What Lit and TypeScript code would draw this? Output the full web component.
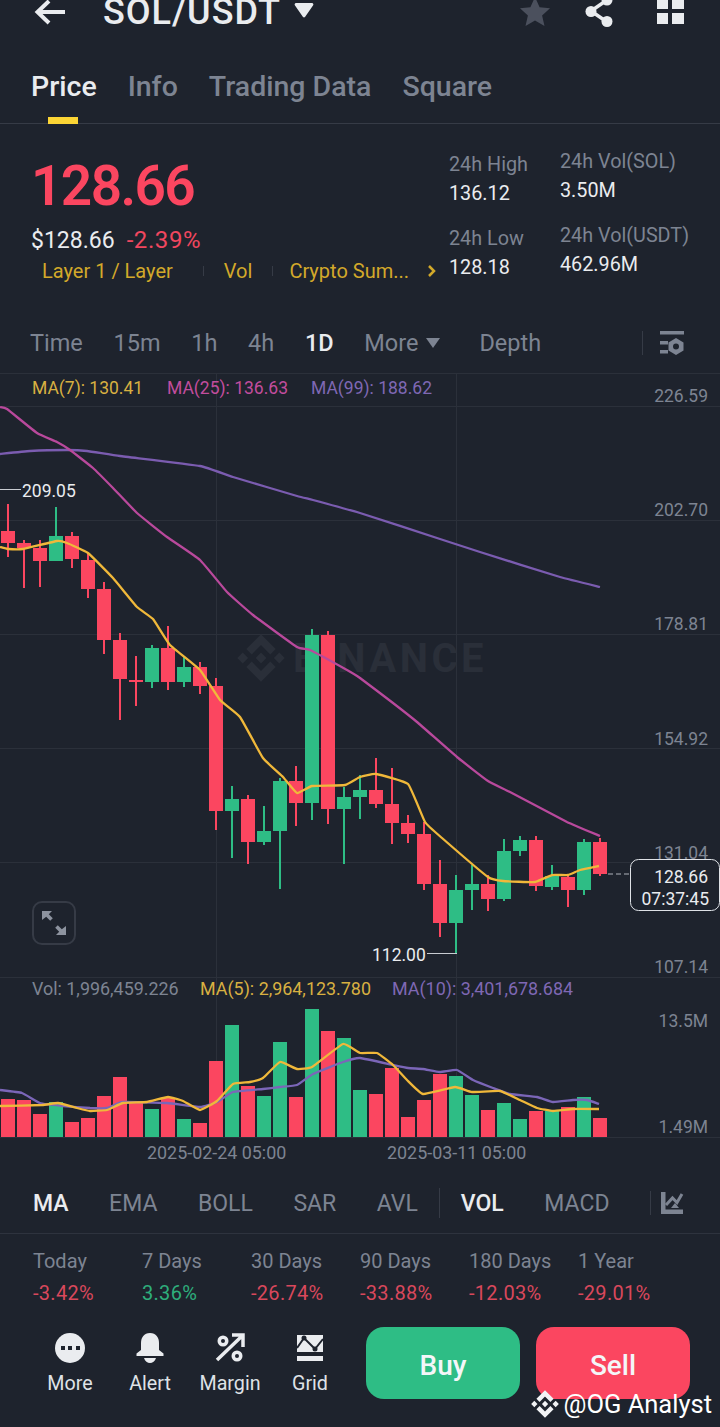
import { LitElement, html, css, svg } from 'lit';
import { customElement } from 'lit/decorators.js';

const GREEN = '#2ebd85';
const RED = '#fb4660';

// body top, body bottom, wick top, wick bottom, up?  one candle every 16px
type Candle = [number, number, number, number, boolean];

const candles: Candle[] = [
  [531, 543, 504, 557, false],
  [543, 548, 540, 588, false],
  [548, 561, 540, 587, false],
  [536, 561, 507, 561, true],
  [536, 559, 532, 568, false],
  [560, 589, 553, 598, false],
  [589, 640, 582, 654, false],
  [640, 679, 633, 720, false],
  [680, 682, 656, 706, false],
  [648, 682, 645, 688, true],
  [648, 682, 626, 690, false],
  [667, 682, 657, 687, true],
  [667, 686, 662, 694, false],
  [686, 811, 678, 830, false],
  [799, 811, 786, 858, true],
  [799, 842, 795, 864, false],
  [831, 842, 806, 845, true],
  [781, 831, 778, 889, true],
  [781, 803, 766, 826, false],
  [635, 803, 629, 820, true],
  [635, 809, 631, 824, false],
  [797, 809, 787, 864, true],
  [790, 797, 775, 819, true],
  [790, 804, 758, 808, false],
  [804, 823, 768, 844, false],
  [823, 834, 815, 843, false],
  [834, 884, 822, 890, false],
  [884, 923, 860, 937, false],
  [890, 923, 875, 953, true],
  [884, 890, 865, 910, true],
  [884, 899, 875, 911, false],
  [851, 899, 839, 901, true],
  [840, 851, 836, 856, true],
  [840, 886, 836, 891, false],
  [876, 887, 865, 890, true],
  [877, 890, 875, 907, false],
  [842, 890, 839, 895, true],
  [842, 874, 838, 876, false],
];

const volumes: [number, boolean][] = [
  [1099, false], [1100, false], [1114, false], [1102, true], [1122, false], [1118, false],
  [1096, false], [1077, false], [1103, false], [1109, true], [1098, false], [1119, true],
  [1123, false], [1061, false], [1025, true], [1086, false], [1096, true], [1042, true],
  [1097, false], [1009, true], [1031, false], [1038, true], [1090, true], [1094, false],
  [1068, false], [1117, false], [1100, false], [1074, false], [1076, true], [1095, true],
  [1110, false], [1103, true], [1119, true], [1111, false], [1111, true], [1107, false],
  [1097, true], [1118, false],
];

const ma7 =
  '0,547 8,549 23,549 57,541 67,543 88,553 113,578 137,607 153,619 170,645 200,670 220,700 240,717 263,758 283,777 297,793 312,786 345,785 360,777 376,774 408,784 425,822 442,838 488,877 503,881 535,882 552,875 568,875 580,870 599,866';
const ma25 =
  '0,407 7,409 37,433 57,442 70,450 93,468 113,488 137,513 167,537 200,560 227,592 253,615 297,647 310,650 347,670 360,678 393,703 417,722 457,757 488,781 510,792 567,822 600,836';
const ma99 =
  '0,454 30,451 67,450 87,451 120,456 200,466 233,477 297,496 313,500 360,513 440,539 480,552 560,577 600,587';
const volMa5 =
  '0,1106 42,1105 58,1103 77,1108 90,1111 107,1110 123,1103 147,1102 168,1097 183,1101 200,1110 217,1101 233,1084 250,1082 263,1078 280,1062 297,1069 312,1067 343,1044 360,1053 377,1053 393,1065 407,1080 423,1094 455,1087 472,1092 500,1091 520,1100 537,1108 553,1111 573,1109 599,1109';
const volMa10 =
  '0,1090 22,1093 40,1103 63,1106 90,1108 107,1108 123,1102 167,1103 200,1107 217,1102 233,1092 263,1089 280,1087 297,1085 313,1074 343,1062 360,1058 393,1065 408,1068 423,1069 440,1072 457,1070 473,1080 493,1088 510,1094 537,1097 553,1102 573,1100 587,1100 599,1104';

// rounds the corners of a moving average a little, like the chart library does
function smooth(points: string) {
  const p = points.split(' ').map((s) => s.split(',').map(Number));
  let d = `M${p[0][0]} ${p[0][1]}`;
  for (let i = 0; i < p.length - 1; i++) {
    const a = p[Math.max(i - 1, 0)];
    const b = p[i];
    const c = p[i + 1];
    const e = p[Math.min(i + 2, p.length - 1)];
    const k = 0.06;
    d += `C${b[0] + (c[0] - a[0]) * k} ${b[1] + (c[1] - a[1]) * k} ${c[0] - (e[0] - b[0]) * k} ${c[1] - (e[1] - b[1]) * k} ${c[0]} ${c[1]}`;
  }
  return d;
}

const gridY = [373, 406, 520, 634, 748, 862, 977, 1137];
const priceLabels: [string, number][] = [
  ['226.59', 396], ['202.70', 510], ['178.81', 624], ['154.92', 739], ['131.04', 853], ['107.14', 967],
];
const perf: [string, string, boolean][] = [
  ['Today', '-3.42%', false],
  ['7 Days', '3.36%', true],
  ['30 Days', '-26.74%', false],
  ['90 Days', '-33.88%', false],
  ['180 Days', '-12.03%', false],
  ['1 Year', '-29.01%', false],
];

const LOGO =
  'M9.8 13.6L16 7.4l6.2 6.2 3.6-3.6L16 .2 6.2 10zM.2 16l3.6-3.6L7.4 16l-3.6 3.6zm9.6 2.4L16 24.6l6.2-6.2 3.6 3.6L16 31.8 6.2 22zM24.6 16l3.6-3.6 3.6 3.6-3.6 3.6zM19.6 16L16 12.4 13.4 15l-.3.3-.6.7L16 19.6z';

@customElement('app-root')
export class AppRoot extends LitElement {
  static styles = css`
    :host {
      display: block;
      position: relative;
      width: 720px;
      height: 1427px;
      overflow: hidden;
      background: #1e232d;
      color: #eaecef;
      font-family: Roboto, 'Noto Sans', sans-serif;
    }

    svg {
      display: block;
      flex: none;
    }

    /* header */
    .header {
      display: flex;
      align-items: center;
      height: 44px;
      margin-top: -10px;
      padding: 0 35px 0 34px;
    }
    .title {
      margin-left: 37px;
      font-size: 36px;
      font-weight: 500;
      letter-spacing: 1px;
      white-space: nowrap;
    }
    .title_caret {
      margin-left: 13px;
    }
    .header_star {
      margin-left: auto;
    }
    .header_share {
      margin-left: 34px;
    }
    .header_grid {
      margin-left: 42px;
    }

    /* tabs */
    .tabs {
      display: flex;
      gap: 31px;
      height: 55px;
      padding: 34px 0 0 31px;
      border-bottom: 1px solid #363b46;
    }
    .tab {
      position: relative;
      height: 38px;
      line-height: 38px;
      font-size: 28.5px;
      font-weight: 500;
      color: #7d8492;
    }
    .tab_on {
      color: #eaecef;
    }
    .tab_on::after {
      content: '';
      position: absolute;
      left: 17px;
      top: 49px;
      width: 30px;
      height: 7px;
      background: #fcd535;
    }

    /* price summary */
    .summary {
      display: flex;
      height: 189px;
    }
    .summary_left {
      width: 449px;
      padding: 32px 0 0 33px;
      box-sizing: border-box;
    }
    .price {
      height: 60px;
      margin-left: -2px;
      line-height: 60px;
      font-size: 55px;
      font-weight: 600;
      letter-spacing: -1.6px;
      color: #fb4660;
    }
    .fiat {
      display: flex;
      align-items: baseline;
      gap: 12px;
      margin: 9px 0 0 -2px;
      line-height: 30px;
      font-size: 23px;
    }
    .fiat_change {
      font-size: 24px;
      letter-spacing: 0.6px;
      color: #f0475f;
    }
    .tags {
      display: flex;
      align-items: center;
      margin: 3px 0 0 9px;
      line-height: 24px;
      font-size: 20px;
      color: #d3a92a;
      white-space: nowrap;
    }
    .tag_rule {
      width: 1px;
      height: 10px;
      margin: 0 20px 0 30px;
      background: #363b46;
    }
    .tag_rule_second {
      margin: 0 16px 0 20px;
    }
    .tag_chevron {
      margin-left: 18px;
    }
    .stat_col {
      padding-top: 26px;
      width: 111px;
    }
    .stat_col_second {
      padding-top: 23px;
      width: auto;
    }
    .stat {
      margin-bottom: 16px;
      line-height: 29px;
      font-size: 19.8px;
      white-space: nowrap;
    }
    .stat_label {
      color: #7d8492;
    }

    /* intervals */
    .intervals {
      display: flex;
      align-items: center;
      height: 60px;
      padding-left: 30px;
      font-size: 23.5px;
      color: #7d8492;
    }
    .interval {
      margin-right: 30.7px;
    }
    .interval_on {
      color: #eaecef;
      font-weight: 500;
    }
    .interval_more {
      display: flex;
      align-items: center;
      gap: 8px;
      margin-right: 39px;
    }
    .intervals_end {
      display: flex;
      align-items: center;
      margin-left: auto;
      padding-right: 36px;
      gap: 17px;
    }
    .rule {
      width: 1px;
      height: 24px;
      background: #363b46;
    }

    /* chart text */
    .legend,
    .legend_vol,
    .axis,
    .axis_date,
    .mark,
    .box_text,
    .brand {
      font-family: Roboto, 'Noto Sans', sans-serif;
    }
    .legend {
      font-size: 17.5px;
    }
    .legend_vol {
      font-size: 17.9px;
    }
    .axis {
      font-size: 17.5px;
      fill: #7d8492;
    }
    .axis_date {
      font-size: 17.9px;
      fill: #7d8492;
    }
    .mark {
      font-size: 17.5px;
      fill: #eaecef;
    }
    .box_text {
      font-size: 17.5px;
      fill: #eaecef;
    }
    .brand {
      font-size: 40px;
      font-weight: 700;
      letter-spacing: 3.5px;
      fill: #2a2f39;
    }
    .line {
      fill: none;
      stroke-width: 2.3;
      stroke-linejoin: round;
    }

    /* indicators */
    .indicators {
      display: flex;
      align-items: center;
      height: 60px;
      padding: 6px 0 0 33px;
      border-bottom: 1px solid #2e333e;
      font-size: 23px;
      color: #7d8492;
    }
    .ind {
      margin-right: 40.5px;
    }
    .ind_on {
      color: #eaecef;
      font-weight: 500;
    }
    .ind_rule {
      margin: 0 21px 0 -19px;
      height: 30px;
    }
    .ind_end {
      display: flex;
      align-items: center;
      margin-left: auto;
      gap: 9px;
      padding-right: 36px;
    }

    /* performance */
    .perf {
      display: grid;
      grid-template-columns: repeat(6, 109px);
      grid-auto-flow: column;
      grid-template-rows: 32px 32px;
      padding: 11px 0 0 33px;
      line-height: 32px;
      font-size: 20px;
    }
    .perf_label {
      color: #7d8492;
    }
    .perf_down {
      letter-spacing: 0.3px;
      color: #d9485c;
    }
    .perf_up {
      letter-spacing: 0.3px;
      color: #2eae7c;
    }

    /* bottom bar */
    .actions {
      display: flex;
      padding: 18px 0 0 30px;
    }
    .nav {
      display: flex;
      flex-direction: column;
      align-items: center;
      width: 80px;
      padding-top: 5px;
      font-size: 19.7px;
      line-height: 24px;
      color: #dfe2e7;
    }
    .nav svg {
      margin-bottom: 8px;
    }
    .trade {
      display: flex;
      align-items: center;
      justify-content: center;
      box-sizing: border-box;
      width: 154px;
      height: 72px;
      margin-left: 16px;
      padding-top: 5px;
      border-radius: 18px;
      font-size: 28px;
      font-weight: 500;
      color: #f4f6f8;
    }
    .trade_buy {
      background: #2ebd85;
    }
    .trade_sell {
      background: #fb4660;
    }

    /* watermark over the sell button */
    .stamp {
      position: absolute;
      right: 8px;
      top: 1386px;
      display: flex;
      align-items: center;
      gap: 5px;
      font-size: 25.5px;
      line-height: 36px;
      color: #fff;
      white-space: nowrap;
    }
  `;

  chart() {
    return html`
      <svg width="720" height="794" viewBox="0 373 720 794">
        ${gridY.map((y) => svg`<rect x="0" y=${y} width="720" height="1" fill="#2b303a" />`)}
        <rect x="216" y="373" width="1" height="765" fill="#2b303a" />
        <rect x="456" y="373" width="1" height="765" fill="#2b303a" />

        <svg x="237" y="634" width="48" height="48" viewBox="0 0 32 32">
          <path d=${LOGO} fill="#2a2f39" />
        </svg>
        <text class="brand" x="293" y="672">BINANCE</text>

        ${volumes.map(
          ([top, up], i) => svg`<rect x=${1 + i * 16} y=${top} width="14" height=${1137 - top} fill=${up ? GREEN : RED} />`,
        )}
        ${candles.map(([top, bottom, hi, lo, up], i) => {
          const color = up ? GREEN : RED;
          return svg`
            <rect x=${7 + i * 16} y=${hi} width="2" height=${lo - hi} fill=${color} />
            <rect x=${1 + i * 16} y=${top} width="14" height=${bottom - top} fill=${color} />
          `;
        })}

        <path class="line" d=${smooth(ma99)} stroke="#7b5cb0" />
        <path class="line" d=${smooth(ma25)} stroke="#b9499c" />
        <path class="line" d=${smooth(ma7)} stroke="#f0b83a" />
        <path class="line" d=${smooth(volMa10)} stroke="#7b66b8" />
        <path class="line" d=${smooth(volMa5)} stroke="#f0b83a" />

        <text class="legend" x="32" y="394" fill="#d8b041">MA(7): 130.41</text>
        <text class="legend" x="167" y="394" fill="#c24d9e">MA(25): 136.63</text>
        <text class="legend" x="311" y="394" fill="#7f68b4">MA(99): 188.62</text>

        ${priceLabels.map(([t, y]) => svg`<text class="axis" x="708" y=${y + 6} text-anchor="end">${t}</text>`)}

        <rect x="0" y="489" width="21" height="1" fill="#c8ccd2" />
        <text class="mark" x="22" y="497">209.05</text>
        <rect x="427" y="953" width="30" height="1" fill="#c8ccd2" />
        <text class="mark" x="372" y="961">112.00</text>

        <line x1="608" y1="874" x2="630" y2="874" stroke="#aeb3bb" stroke-width="1" stroke-dasharray="5 3" />
        <rect x="630.5" y="859.5" width="89" height="51" rx="8" fill="#1e232d" stroke="#dfe2e7" />
        <text class="box_text" x="708" y="883" text-anchor="end">128.66</text>
        <text class="box_text" x="709" y="905" text-anchor="end">07:37:45</text>

        <rect x="33" y="902" width="42" height="42" rx="9" fill="none" stroke="#363b46" stroke-width="2" />
        <path
          d="M42 911h10l-3.2 3.2 4 4-2.6 2.6-4-4L42 920zM66 935H56l3.2-3.2-4-4 2.6-2.6 4 4L66 926z"
          fill="#8d939f"
        />

        <text class="legend_vol" x="32" y="995" fill="#7d8492">Vol: 1,996,459.226</text>
        <text class="legend_vol" x="200" y="995" fill="#d8b041">MA(5): 2,964,123.780</text>
        <text class="legend_vol" x="392" y="995" fill="#7f68b4">MA(10): 3,401,678.684</text>
        <text class="axis" x="708" y="1027" text-anchor="end">13.5M</text>
        <text class="axis" x="708" y="1133" text-anchor="end">1.49M</text>
        <text class="axis_date" x="147" y="1159">2025-02-24 05:00</text>
        <text class="axis_date" x="387" y="1159">2025-03-11 05:00</text>
      </svg>
    `;
  }

  render() {
    return html`
      <div class="header">
        <svg width="32" height="44" viewBox="0 0 32 44">
          <path d="M31 22H4M15 11 3.5 22 15 33" fill="none" stroke="#eaecef" stroke-width="4" />
        </svg>
        <span class="title">SOL/USDT</span>
        <svg class="title_caret" width="20" height="44" viewBox="0 0 20 44">
          <path d="M2 13h16a1.5 1.5 0 0 1 1 2.5L11 27a1.5 1.5 0 0 1-2 0L1 15.5A1.5 1.5 0 0 1 2 13z" fill="#eaecef" />
        </svg>
        <svg class="header_star" width="32" height="44" viewBox="0 0 32 44">
          <path d="M16 7l4.6 10.2 10.4 1-7.9 7.2 2.4 10.6L16 30.5 6.5 36l2.4-10.6L1 18.2l10.4-1z" fill="#4b505d" />
        </svg>
        <svg class="header_share" width="28" height="44" viewBox="0 0 28 44">
          <path d="M22 10 6 21l16 11" fill="none" stroke="#eaecef" stroke-width="3.5" />
          <circle cx="6" cy="21.5" r="5.5" fill="#eaecef" />
          <circle cx="22" cy="10" r="5.5" fill="#eaecef" />
          <circle cx="22" cy="31.5" r="5.5" fill="#eaecef" />
        </svg>
        <svg class="header_grid" width="30" height="44" viewBox="0 0 30 44">
          <path d="M2 6h11v13H2zM17 6h12v13H17zM2 23h11v11H2zM17 23h12v11H17z" fill="#eaecef" />
        </svg>
      </div>

      <div class="tabs">
        <span class="tab tab_on">Price</span>
        <span class="tab">Info</span>
        <span class="tab">Trading Data</span>
        <span class="tab">Square</span>
      </div>

      <div class="summary">
        <div class="summary_left">
          <div class="price">128.66</div>
          <div class="fiat"><span>$128.66</span><span class="fiat_change">-2.39%</span></div>
          <div class="tags">
            <span>Layer 1 / Layer</span>
            <span class="tag_rule"></span>
            <span>Vol</span>
            <span class="tag_rule tag_rule_second"></span>
            <span>Crypto Sum...</span>
            <svg class="tag_chevron" width="10" height="14" viewBox="0 0 10 14">
              <path d="M2 2l5 5-5 5" fill="none" stroke="#d3a92a" stroke-width="2.5" />
            </svg>
          </div>
        </div>
        <div class="stat_col">
          <div class="stat"><div class="stat_label">24h High</div><div>136.12</div></div>
          <div class="stat"><div class="stat_label">24h Low</div><div>128.18</div></div>
        </div>
        <div class="stat_col stat_col_second">
          <div class="stat"><div class="stat_label">24h Vol(SOL)</div><div>3.50M</div></div>
          <div class="stat"><div class="stat_label">24h Vol(USDT)</div><div>462.96M</div></div>
        </div>
      </div>

      <div class="intervals">
        <span class="interval">Time</span>
        <span class="interval">15m</span>
        <span class="interval">1h</span>
        <span class="interval">4h</span>
        <span class="interval interval_on">1D</span>
        <span class="interval_more">
          More
          <svg width="14" height="10" viewBox="0 0 14 10"><path d="M0 0h14L7 10z" fill="#7d8492" /></svg>
        </span>
        <span>Depth</span>
        <span class="intervals_end">
          <span class="rule"></span>
          <svg width="24" height="26" viewBox="0 0 24 26" fill="#7d8492">
            <path d="M0 1h24v3.5H0zM0 11h8v3.5H0zM0 20h8v3.5H0z" />
            <path fill-rule="evenodd" d="M16 8l7.5 4.5v8L16 25l-7.5-4.5v-8zM16 13.5a3 3 0 1 0 0 6 3 3 0 0 0 0-6z" />
          </svg>
        </span>
      </div>

      ${this.chart()}

      <div class="indicators">
        <span class="ind ind_on">MA</span>
        <span class="ind">EMA</span>
        <span class="ind">BOLL</span>
        <span class="ind">SAR</span>
        <span class="ind">AVL</span>
        <span class="rule ind_rule"></span>
        <span class="ind ind_on">VOL</span>
        <span class="ind">MACD</span>
        <span class="ind_end">
          <span class="rule"></span>
          <svg width="24" height="24" viewBox="0 0 24 24" fill="#7d8492">
            <path d="M1 1h4.5v17.5H23V23H1z" />
            <path d="M6 14l6.5-7 4.500 4.500L22 3" fill="none" stroke="#7d8492" stroke-width="3" />
            <path d="M11 17l4-5 4 5z" />
          </svg>
        </span>
      </div>

      <div class="perf">
        ${perf.map(
          ([label, value, up]) => html`
            <span class="perf_label">${label}</span>
            <span class=${up ? 'perf_up' : 'perf_down'}>${value}</span>
          `,
        )}
      </div>

      <div class="actions">
        <div class="nav">
          <svg width="40" height="32" viewBox="0 0 40 32">
            <circle cx="20" cy="16" r="15" fill="#eaecef" />
            <path d="M11 14h4v4h-4zM18 14h4v4h-4zM26 14h4v4h-4z" fill="#1e232d" />
          </svg>
          More
        </div>
        <div class="nav">
          <svg width="40" height="32" viewBox="0 0 40 32">
            <path
              d="M20 1c6 0 9 4.5 9 10v7l4.5 3.5V24h-27v-2.500L11 18v-7c0-5.500 3-10 9-10zM14 26h12c-1 3.500-3.500 5-6 5s-5-1.500-6-5z"
              fill="#eaecef"
            />
          </svg>
          Alert
        </div>
        <div class="nav">
          <svg width="40" height="32" viewBox="0 0 40 32">
            <path d="M7 28 32 4M22 3h11v12" fill="none" stroke="#eaecef" stroke-width="3.5" />
            <circle cx="13" cy="9" r="5.5" fill="#eaecef" />
            <circle cx="13" cy="9" r="2" fill="#1e232d" />
            <circle cx="27" cy="24" r="5.5" fill="#eaecef" />
            <circle cx="27" cy="24" r="2" fill="#1e232d" />
          </svg>
          Margin
        </div>
        <div class="nav">
          <svg width="40" height="32" viewBox="0 0 40 32">
            <path d="M7 3h26v17H7zM7 24h26v5H7z" fill="#eaecef" />
            <path d="M7 16l7-10 11 11 8-10" fill="none" stroke="#1e232d" stroke-width="2" />
            <circle cx="14" cy="6" r="2.5" fill="#1e232d" />
            <circle cx="25" cy="17" r="2.5" fill="#1e232d" />
          </svg>
          Grid
        </div>
        <div class="trade trade_buy">Buy</div>
        <div class="trade trade_sell">Sell</div>
      </div>

      <div class="stamp">
        <svg width="28" height="28" viewBox="0 0 32 32"><path d=${LOGO} fill="#f2f3f5" /></svg>
        @OG Analyst
      </div>
    `;
  }
}
